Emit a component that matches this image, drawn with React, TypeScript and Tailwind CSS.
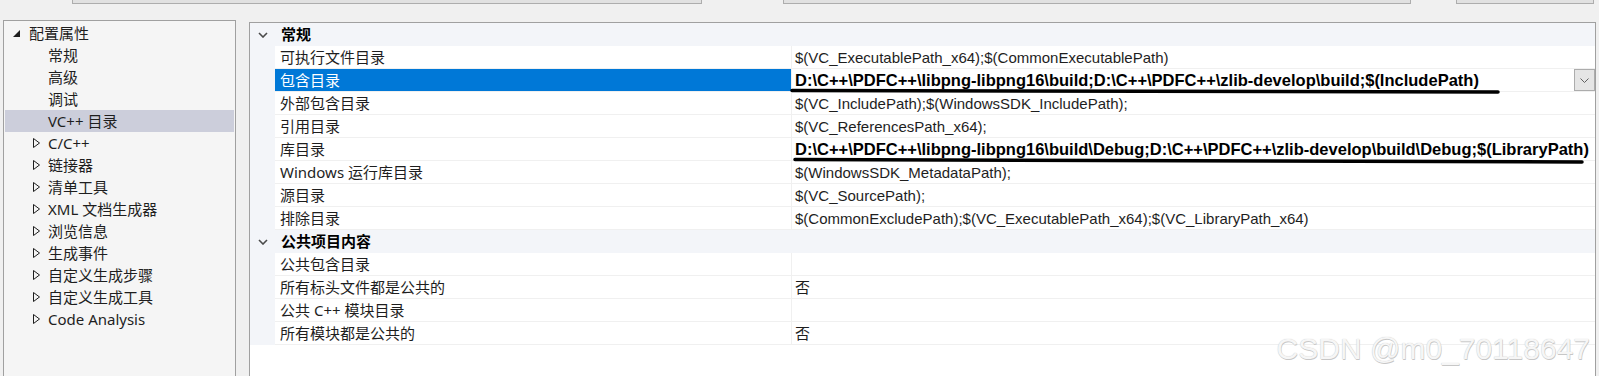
import React from 'react';

type TreeItem = { label: string; kind: 'root' | 'leaf' | 'collapsed'; selected?: boolean };

type PropRow = { name: string; value?: string; bold?: boolean; selected?: boolean };

type Section = { title: string; rows: PropRow[] };

const treeItems: TreeItem[] = [
  { label: '配置属性', kind: 'root' },
  { label: '常规', kind: 'leaf' },
  { label: '高级', kind: 'leaf' },
  { label: '调试', kind: 'leaf' },
  { label: 'VC++ 目录', kind: 'leaf', selected: true },
  { label: 'C/C++', kind: 'collapsed' },
  { label: '链接器', kind: 'collapsed' },
  { label: '清单工具', kind: 'collapsed' },
  { label: 'XML 文档生成器', kind: 'collapsed' },
  { label: '浏览信息', kind: 'collapsed' },
  { label: '生成事件', kind: 'collapsed' },
  { label: '自定义生成步骤', kind: 'collapsed' },
  { label: '自定义生成工具', kind: 'collapsed' },
  { label: 'Code Analysis', kind: 'collapsed' },
];

const sections: Section[] = [
  {
    title: '常规',
    rows: [
      { name: '可执行文件目录', value: '$(VC_ExecutablePath_x64);$(CommonExecutablePath)' },
      {
        name: '包含目录',
        value: 'D:\\C++\\PDFC++\\libpng-libpng16\\build;D:\\C++\\PDFC++\\zlib-develop\\build;$(IncludePath)',
        bold: true,
        selected: true,
      },
      { name: '外部包含目录', value: '$(VC_IncludePath);$(WindowsSDK_IncludePath);' },
      { name: '引用目录', value: '$(VC_ReferencesPath_x64);' },
      {
        name: '库目录',
        value: 'D:\\C++\\PDFC++\\libpng-libpng16\\build\\Debug;D:\\C++\\PDFC++\\zlib-develop\\build\\Debug;$(LibraryPath)',
        bold: true,
      },
      { name: 'Windows 运行库目录', value: '$(WindowsSDK_MetadataPath);' },
      { name: '源目录', value: '$(VC_SourcePath);' },
      { name: '排除目录', value: '$(CommonExcludePath);$(VC_ExecutablePath_x64);$(VC_LibraryPath_x64)' },
    ],
  },
  {
    title: '公共项目内容',
    rows: [
      { name: '公共包含目录' },
      { name: '所有标头文件都是公共的', value: '否' },
      { name: '公共 C++ 模块目录' },
      { name: '所有模块都是公共的', value: '否' },
    ],
  },
];

const TreeRow: React.FC<{ item: TreeItem }> = ({ item }) => {
  return (
    <div className={`h-[22px] flex items-center ${item.selected ? 'bg-[#cccedb]' : ''}`}>
      {item.kind === 'root' && (
        <>
          <div className="w-[8px] shrink-0" />
          <svg width="7" height="7" viewBox="0 0 7 7" className="shrink-0">
            <polygon points="7,0 7,7 0,7" fill="#1e1e1e" />
          </svg>
          <div className="w-[9px] shrink-0" />
        </>
      )}
      {item.kind === 'leaf' && <div className="w-[43px] shrink-0" />}
      {item.kind === 'collapsed' && (
        <>
          <div className="w-[28px] shrink-0" />
          <svg width="7" height="10" viewBox="0 0 7 10" className="shrink-0">
            <polygon points="0.5,0.5 6.5,5 0.5,9.5" fill="none" stroke="#1e1e1e" strokeWidth="1" />
          </svg>
          <div className="w-[8px] shrink-0" />
        </>
      )}
      <span className="whitespace-nowrap leading-none">{item.label}</span>
    </div>
  );
};

const ValueText: React.FC<{ row: PropRow }> = ({ row }) => {
  if (!row.value) return null;
  return (
    <span
      className={`whitespace-nowrap leading-none font-['Liberation_Sans','Noto_Sans_CJK_SC',sans-serif] ${
        row.bold ? 'font-bold text-[16.5px] text-black' : 'text-[15px] text-[#1e1e1e]'
      }`}
    >
      {row.value}
    </span>
  );
};

const GridRow: React.FC<{ row: PropRow }> = ({ row }) => {
  return (
    <div className="h-[23px] flex">
      <div className="w-[25px] shrink-0 bg-[#f3f5f9]" />
      <div
        className={`w-[516px] shrink-0 flex items-center pl-[5px] border-b border-[#f0f0f0] ${
          row.selected ? 'bg-[#0078d7] text-white border-[#0078d7]' : ''
        }`}
      >
        <span className="whitespace-nowrap leading-none">{row.name}</span>
      </div>
      <div className="w-[1px] shrink-0 bg-[#f0f0f0]" />
      <div className="flex-1 flex items-center justify-between pl-[3px] border-b border-[#f0f0f0] min-w-0">
        <ValueText row={row} />
        {row.selected && (
          <div className="w-[21px] h-[22px] shrink-0 flex items-center justify-center bg-[#e5e5e5] border border-[#acacac]">
            <svg width="9" height="5" viewBox="0 0 9 5">
              <polyline points="0.5,0.5 4.5,4.5 8.5,0.5" fill="none" stroke="#606060" strokeWidth="1" />
            </svg>
          </div>
        )}
      </div>
    </div>
  );
};

const SectionHeader: React.FC<{ title: string }> = ({ title }) => (
  <div className="h-[23px] flex items-center bg-[#f3f5f9]">
    <div className="w-[25px] shrink-0 flex items-center justify-center">
      <svg width="10" height="6" viewBox="0 0 10 6">
        <polyline points="1,1 5,5 9,1" fill="none" stroke="#4a4a4a" strokeWidth="1.6" />
      </svg>
    </div>
    <span className="pl-[6px] font-bold whitespace-nowrap leading-none text-black">{title}</span>
  </div>
);

export default function App() {
  return (
    <div className="relative w-[1599px] h-[376px] overflow-hidden bg-[#f0f0f0] text-[15px] text-[#1e1e1e] font-['Noto_Sans','Noto_Sans_CJK_SC',sans-serif]">
      {/* bottoms of the buttons above, cut off by the crop */}
      <div className="flex h-[4px]">
        <div className="ml-[72px] w-[630px] h-[4px] bg-[#e1e1e1] border-x border-b border-[#adadad]" />
        <div className="ml-[81px] w-[628px] h-[4px] bg-[#e1e1e1] border-x border-b border-[#adadad]" />
        <div className="ml-[45px] w-[138px] h-[4px] bg-[#e1e1e1] border-x border-b border-[#adadad]" />
      </div>

      <div className="flex items-start">
        {/* Tree */}
        <div className="mt-[16px] ml-[3px] w-[233px] h-[370px] shrink-0 bg-[#f5f5f5] border border-[#a0a0a0] pt-[1px] px-[1px]">
          {treeItems.map((item) => (
            <TreeRow key={item.label} item={item} />
          ))}
        </div>

        {/* Property grid */}
        <div className="mt-[18px] ml-[13px] w-[1347px] h-[370px] shrink-0 bg-white border border-[#a0a0a0]">
          {sections.map((s) => (
            <div key={s.title}>
              <SectionHeader title={s.title} />
              {s.rows.map((r) => (
                <GridRow key={r.name} row={r} />
              ))}
            </div>
          ))}
        </div>
      </div>

      {/* hand-drawn underlines */}
      <svg className="absolute left-0 top-0 pointer-events-none" width="1599" height="376" viewBox="0 0 1599 376">
        <path d="M792 90.5 Q1150 91.5 1498 92" fill="none" stroke="#000" strokeWidth="3.5" strokeLinecap="round" />
        <path d="M795 159.5 Q1200 160.5 1582 162" fill="none" stroke="#000" strokeWidth="3.5" strokeLinecap="round" />
      </svg>

      {/* watermark */}
      <div className="absolute top-[334px] right-[9px] text-[30px] leading-[30px] whitespace-nowrap font-['Liberation_Sans',sans-serif] text-[#f6f6f6] [text-shadow:0_0_1px_#bdbdbd,0.5px_0.5px_0.5px_#c8c8c8] pointer-events-none">
        CSDN @m0_70118647
      </div>
    </div>
  );
}
